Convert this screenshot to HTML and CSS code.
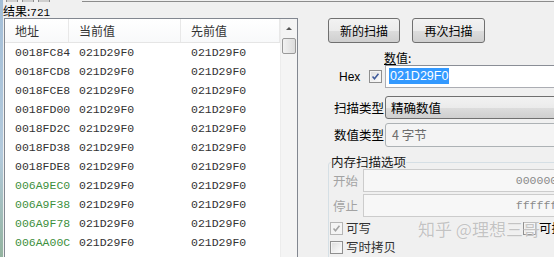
FILE: index.html
```html
<!DOCTYPE html>
<html lang="zh-CN">
  <head>
    <meta charset="UTF-8" />
    <meta name="viewport" content="width=device-width, initial-scale=1.0" />
    <title>扫描</title>
    <link rel="stylesheet" href="styles.css">
  </head>
  <body>
    <div class="desktop"></div>

    <div class="window">
      <div class="tabs">
        <span class="tab"></span>
        <span class="tab"></span>
        <span class="tab"></span>
        <span class="tab-line"></span>
      </div>

      <div class="content">
        <!-- 扫描结果列表 -->
        <section class="left">
          <div class="count">结果:<span class="num">721</span></div>
          <div class="list">
            <div class="table">
              <div class="head">
                <span>地址</span>
                <span>当前值</span>
                <span>先前值</span>
              </div>
              <div class="row"><span>0018FC84</span><span>021D29F0</span><span>021D29F0</span></div>
              <div class="row"><span>0018FCD8</span><span>021D29F0</span><span>021D29F0</span></div>
              <div class="row"><span>0018FCE8</span><span>021D29F0</span><span>021D29F0</span></div>
              <div class="row"><span>0018FD00</span><span>021D29F0</span><span>021D29F0</span></div>
              <div class="row"><span>0018FD2C</span><span>021D29F0</span><span>021D29F0</span></div>
              <div class="row"><span>0018FD38</span><span>021D29F0</span><span>021D29F0</span></div>
              <div class="row"><span>0018FDE8</span><span>021D29F0</span><span>021D29F0</span></div>
              <div class="row static"><span>006A9EC0</span><span>021D29F0</span><span>021D29F0</span></div>
              <div class="row static"><span>006A9F38</span><span>021D29F0</span><span>021D29F0</span></div>
              <div class="row static"><span>006A9F78</span><span>021D29F0</span><span>021D29F0</span></div>
              <div class="row static"><span>006AA00C</span><span>021D29F0</span><span>021D29F0</span></div>
            </div>
            <div class="scroll">
              <span class="arrow-up"></span>
              <span class="thumb"></span>
            </div>
          </div>
        </section>

        <!-- 扫描设置 -->
        <section class="right">
          <div class="buttons">
            <button class="btn">新的扫描</button>
            <button class="btn wide">再次扫描</button>
          </div>

          <div class="value-label"><u>数</u>值:</div>
          <div class="hex-row">
            <span class="hex-label">Hex</span>
            <span class="check on">
              <svg viewBox="0 0 13 13"><path d="M3 6.5 L5.3 9.2 L10 3.2" /></svg>
            </span>
            <div class="input-hex"><span class="sel">021D29F0</span></div>
          </div>

          <div class="field-row">
            <label>扫描类型</label>
            <div class="combo">精确数值</div>
          </div>
          <div class="field-row type-row">
            <label>数值类型</label>
            <div class="combo disabled">4 字节</div>
          </div>

          <fieldset class="memory">
            <legend>内存扫描选项</legend>
            <div class="range-row">
              <label>开始</label>
              <div class="range-input">00000000</div>
            </div>
            <div class="range-row">
              <label>停止</label>
              <div class="range-input">ffffffff</div>
            </div>
            <div class="opt-row">
              <span class="opt">
                <span class="check on off">
                  <svg viewBox="0 0 13 13"><path d="M3 6.5 L5.3 9.2 L10 3.2" /></svg>
                </span>
                可写
              </span>
              <span class="opt far">
                <span class="check"></span>
                可执
              </span>
            </div>
            <div class="opt-row second">
              <span class="opt">
                <span class="check"></span>
                写时拷贝
              </span>
            </div>
          </fieldset>

          <div class="watermark">知乎 @理想三哥</div>
        </section>
      </div>
    </div>
  </body>
</html>
```

FILE: styles.css
```css
* {
  box-sizing: border-box;
}
body {
  margin: 0;
  width: 554px;
  height: 257px;
  overflow: hidden;
  display: flex;
  background: #f0f0f0;
  font-family: "Noto Sans CJK SC", "Liberation Sans", sans-serif;
  font-size: 12px;
  line-height: 14px;
  color: #1a1a1a;
}
.desktop {
  width: 3px;
  flex-shrink: 0;
  background: linear-gradient(#a4bfd8, #b3cadc 60%, #93b39f);
}
.window {
  flex: 1;
  display: flex;
  flex-direction: column;
  min-width: 0;
}

/* tab strip */
.tabs {
  height: 3px;
  display: flex;
  gap: 4px;
  padding-left: 3px;
}
.tab {
  width: 12px;
  height: 2px;
  background: #cfcfcf;
  border-left: 1px solid #8c8c8c;
  border-right: 1px solid #8c8c8c;
}
.tab-line {
  flex: 1;
  height: 2px;
  margin-left: 28px;
  border-top: 1px solid #8c8c8c;
  margin-top: 1px;
}

.content {
  flex: 1;
  display: flex;
  min-height: 0;
}

/* left list */
.left {
  width: 295px;
  flex-shrink: 0;
}
.count {
  height: 15px;
  line-height: 15px;
  color: #000;
}
.num {
  font-family: "Liberation Mono", monospace;
  font-size: 11px;
}
.list {
  margin-left: 1px;
  height: 239px;
  display: flex;
  background: #fff;
  border: 1px solid #828790;
  border-bottom: none;
}
.table {
  flex: 1;
  overflow: hidden;
}
.head,
.row {
  display: grid;
  grid-template-columns: 64px 112px 1fr;
}
.head {
  height: 24px;
  background: linear-gradient(#ffffff, #f8f9fa);
  border-bottom: 1px solid #e5e5e5;
  color: #333;
}
.head span {
  padding-left: 10px;
  line-height: 23px;
  border-right: 1px solid #e8e8e8;
}
.row {
  height: 19px;
  line-height: 19px;
  font-family: "Liberation Mono", monospace;
  font-size: 11.5px;
  color: #333;
}
.row span {
  padding-left: 10px;
}
.row.static span:first-child {
  color: #3d8f3d;
}
.scroll {
  width: 17px;
  display: flex;
  flex-direction: column;
  align-items: center;
  background: #f4f4f4;
  border-left: 1px solid #ececec;
}
.arrow-up {
  margin-top: 8px;
  width: 0;
  height: 0;
  border-left: 3px solid transparent;
  border-right: 3px solid transparent;
  border-bottom: 3px solid #555;
}
.thumb {
  margin-top: 8px;
  width: 14px;
  height: 16px;
  border: 1px solid #999;
  border-radius: 2px;
  background: linear-gradient(90deg, #f2f2f2, #dcdcdc);
}

/* right panel */
.right {
  flex: 1;
  position: relative;
  overflow: hidden;
  padding: 15px 0 0 30px;
}
.buttons {
  display: flex;
  gap: 12px;
}
.btn {
  width: 72px;
  height: 25px;
  padding: 0;
  font: inherit;
  color: #000;
  border: 1px solid #707070;
  border-radius: 3px;
  background: linear-gradient(#f2f2f2 0%, #ebebeb 50%, #dddddd 51%, #cfcfcf 100%);
}
.btn.wide {
  width: 73px;
}
.value-label {
  margin: 8px 0 0 56px;
  height: 14px;
  line-height: 14px;
  color: #000;
}
.hex-row {
  display: flex;
  align-items: center;
  height: 23px;
  margin-left: 11px;
}
.hex-label {
  width: 30px;
  flex-shrink: 0;
  font-family: "Liberation Sans", sans-serif;
  font-size: 12px;
  color: #000;
}
.check {
  width: 13px;
  height: 13px;
  flex-shrink: 0;
  display: inline-block;
  border: 1px solid #8f8f8f;
  background: linear-gradient(135deg, #dcdcdc, #ffffff);
  box-shadow: inset 0 0 0 1px #f4f4f4;
}
.check svg {
  display: block;
  width: 11px;
  height: 11px;
}
.check path {
  fill: none;
  stroke: #3f5a9a;
  stroke-width: 1.8;
}
.check.off {
  border-color: #b5b5b5;
  background: #f4f4f4;
}
.check.off path {
  stroke: #a3a3a3;
}
.hex-row .check {
  margin-right: 3px;
}
.input-hex {
  width: 200px;
  flex-shrink: 0;
  height: 23px;
  padding: 2px 0 0 3px;
  background: #fff;
  border: 1px solid #abadb3;
  border-top-color: #8a8e96;
}
.sel {
  display: inline-block;
  height: 16px;
  line-height: 16px;
  padding: 0 1px;
  background: #3399ff;
  color: #fff;
  font-family: "Liberation Sans", sans-serif;
  font-size: 12.5px;
  vertical-align: top;
}
.field-row {
  display: flex;
  align-items: center;
  margin: 8px 0 0 6px;
}
.field-row label {
  width: 51px;
  flex-shrink: 0;
  white-space: nowrap;
  font-size: 12.5px;
  color: #000;
}
.type-row {
  margin-top: 4px;
}
.combo {
  width: 200px;
  flex-shrink: 0;
  height: 23px;
  line-height: 21px;
  padding-left: 5px;
  border: 1px solid #707070;
  border-radius: 3px;
  background: linear-gradient(#f2f2f2 0%, #ebebeb 50%, #dddddd 51%, #cfcfcf 100%);
  font-size: 12.5px;
  color: #000;
}
.combo.disabled {
  height: 24px;
  padding-left: 6px;
  border-color: #adb2b5;
  background: #f4f4f4;
  color: #6d6d6d;
}

/* memory options */
.memory {
  width: 260px;
  min-width: 0;
  margin: 8px 0 0;
  padding: 0 0 20px 4px;
  border: 1px solid #d5dfe5;
  border-radius: 3px;
}
.memory legend {
  padding: 0;
  margin-left: -2px;
  line-height: 14px;
  font-size: 12.5px;
  color: #1a1a1a;
}
.range-row {
  display: flex;
  align-items: center;
  height: 23px;
  margin-bottom: 2px;
}
.range-row label {
  width: 30px;
  flex-shrink: 0;
  white-space: nowrap;
  color: #a3a3a3;
  font-size: 12.5px;
}
.range-input {
  width: 213px;
  flex-shrink: 0;
  height: 23px;
  line-height: 21px;
  padding-right: 4px;
  text-align: right;
  background: #f7f7f7;
  border: 1px solid #cccccc;
  font-family: "Liberation Mono", monospace;
  font-size: 11.5px;
  color: #8a8a8a;
}
.opt-row {
  display: flex;
  align-items: center;
  height: 14px;
  margin: 4px 0 0 -3px;
}
.opt-row.second {
  margin-top: 5px;
}
.opt {
  display: flex;
  align-items: center;
  gap: 3px;
  font-size: 12.5px;
  color: #333;
  white-space: nowrap;
}
.opt.far {
  margin-left: 152px;
  color: #000;
}
.watermark {
  position: absolute;
  left: 120px;
  top: 216px;
  font-size: 17px;
  line-height: 20px;
  color: rgba(185, 185, 185, 0.85);
  text-shadow: 0 0 1px #fff;
  white-space: nowrap;
}
```
